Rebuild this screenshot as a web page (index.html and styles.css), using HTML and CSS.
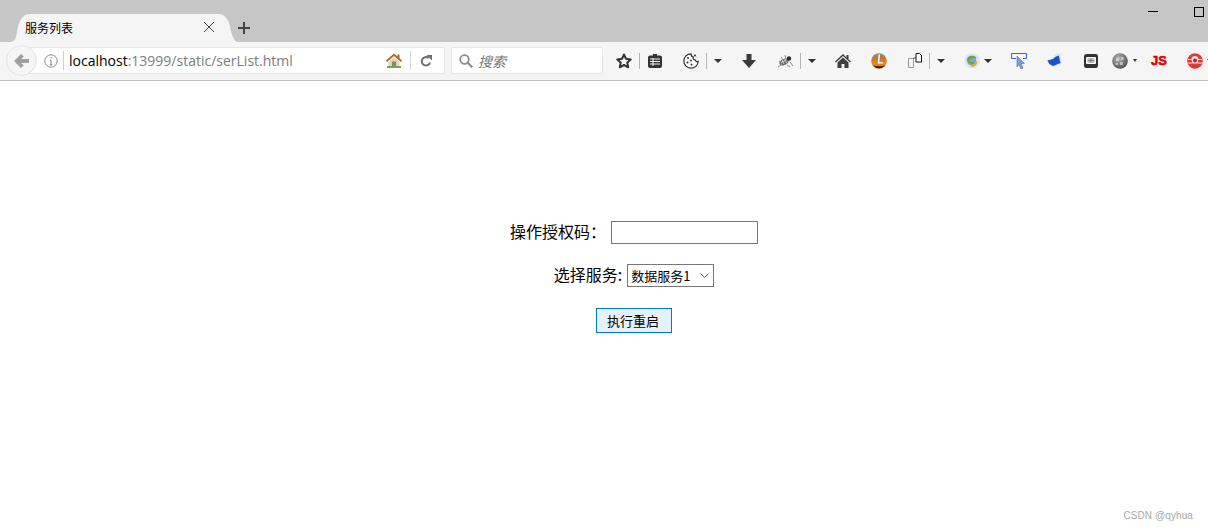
FILE: index.html
```html
<!DOCTYPE html>
<html lang="zh">
<head>
    <meta charset="UTF-8">
    <title>服务列表</title>
    <link rel="stylesheet" href="styles.css">
</head>
<body>
    <!-- 标题栏 -->
    <div class="titlebar">
        <div class="tab">
            <span class="tab-title">服务列表</span>
            <svg class="tab-close" width="12" height="12" viewBox="0 0 12 12"><path d="M1 1l10 10M11 1L1 11" stroke="#444" stroke-width="1" fill="none"/></svg>
        </div>
        <svg class="tab-new" width="12" height="12" viewBox="0 0 12 12"><path d="M6 0v12M0 6h12" stroke="#444" stroke-width="2" fill="none"/></svg>
        <div class="window-controls">
            <span class="win-min"></span>
            <span class="win-max"></span>
        </div>
    </div>

    <!-- 工具栏 -->
    <div class="toolbar">
        <div class="back-btn">
            <svg width="15" height="14" viewBox="0 0 15 14"><path d="M7 0l2.800 2.600L7.200 5H15v4H7.200l2.600 2.400L7 14 0 7z" fill="#a0a0a0"/></svg>
        </div>
        <div class="urlbar">
            <svg class="url-info" width="14" height="14" viewBox="0 0 14 14"><circle cx="7" cy="7" r="6.200" fill="none" stroke="#8a8a8a"/><path d="M7 3v1.600M7 6v5M5.800 6.200H7M5.800 10.800h2.400" stroke="#808080" fill="none"/></svg>
            <span class="url-sep"></span>
            <span class="url-text"><b>localhost</b>:13999/static/serList.html</span>
            <svg class="url-home" width="16" height="15" viewBox="0 0 16 15">
                <path d="M8 4L2.500 9V13.500h11V9z" fill="#e8d4aa"/>
                <path d="M8 .5L0 7.500l1 1.500 7-6 7 6 1-1.500-2.500-2.200V1.500h-2v2z" fill="#a8692c"/>
                <rect x="6" y="8.500" width="4" height="5" fill="#7f858c"/>
                <rect x="1" y="13" width="14" height="2" fill="#6ea84a"/>
            </svg>
            <span class="url-sep-right"></span>
            <svg class="url-reload" width="12" height="12" viewBox="0 0 12 12"><path d="M10 7.500A4.200 4.200 0 1 1 8.600 3" fill="none" stroke="#6e6e6e" stroke-width="2"/><path d="M6.500 0H12v5.500z" fill="#6e6e6e"/></svg>
        </div>
        <div class="searchbar">
            <svg width="14" height="14" viewBox="0 0 14 14"><circle cx="5.500" cy="5.500" r="4.300" fill="none" stroke="#8c8c8c" stroke-width="1.800"/><path d="M8.800 8.800l4.400 4.400" stroke="#8c8c8c" stroke-width="2.200"/></svg>
            <span class="search-text">搜索</span>
        </div>

        <svg class="ic-star" width="16" height="16" viewBox="0 0 16 16"><path d="M8 1.500l2 4.300 4.700.6-3.400 3.200.9 4.700L8 12l-4.200 2.300.9-4.700L1.300 6.400 6 5.800z" fill="none" stroke="#333" stroke-width="2" stroke-linejoin="round"/></svg>
        <span class="sep sep-star"></span>
        <svg class="ic-clip" width="14" height="15" viewBox="0 0 14 15"><path d="M2 2.500h3V1h4v1.500h3a2 2 0 0 1 2 2V13a2 2 0 0 1-2 2H2a2 2 0 0 1-2-2V4.500a2 2 0 0 1 2-2z" fill="#333"/><path d="M2 6h10M2 8.500h10M2 11h10M5 5v8" stroke="#f5f5f5" fill="none"/></svg>
        <svg class="ic-cookie" width="16" height="16" viewBox="0 0 16 16"><path d="M8 .8a7.200 7.200 0 1 0 7.200 7.700c-1.300.6-2.700-.2-2.800-1.500C10.800 7 9.600 5.500 10.300 4 9 3.800 8 2.500 8 .8z" fill="#fff" stroke="#333" stroke-width="1.200"/><circle cx="5" cy="5" r="1" fill="#333"/><circle cx="8" cy="7.500" r="1" fill="#333"/><circle cx="4.500" cy="9.500" r="1" fill="#333"/><circle cx="8.500" cy="11.500" r="1" fill="#333"/><circle cx="12" cy="2.500" r="1" fill="#333"/></svg>
        <span class="sep sep-cookie"></span>
        <span class="caret caret-cookie"></span>
        <svg class="ic-down" width="14" height="14" viewBox="0 0 14 14"><path d="M4.500 0h5v6H14l-7 8-7-8h4.500z" fill="#3a3a3a"/></svg>
        <svg class="ic-bug" width="16" height="14" viewBox="0 0 16 14"><ellipse cx="7" cy="8" rx="4.800" ry="3" transform="rotate(-25 7 8)" fill="#707070"/><path d="M4 9l5-3M5 6l2 4M8 5l1.500 4" stroke="#ddd" stroke-width=".8"/><circle cx="12" cy="4.500" r="2.200" fill="#2c2c2c"/><path d="M1 13l4-3M4 3l2 3M8 1l1 4M13 8l3 4M2 7l3 1M10 11l3 2" stroke="#888" fill="none"/></svg>
        <span class="sep sep-bug"></span>
        <span class="caret caret-bug"></span>
        <svg class="ic-home" width="16" height="14" viewBox="0 0 16 14"><path d="M8 0L0 7.500l1 1L8 2l7 6.500 1-1-2.500-2.300V1h-2v2.400z" fill="#3f3f3f"/><path d="M8 3.400L2.500 8.500V14H6.500V10h3v4h4V8.500z" fill="#3f3f3f"/></svg>
        <svg class="ic-l" width="16" height="16" viewBox="0 0 16 16">
            <defs><linearGradient id="lg" x1="0" y1="0" x2="0" y2="1"><stop offset="0" stop-color="#8f8f8f"/><stop offset=".3" stop-color="#b07a3c"/><stop offset=".65" stop-color="#ef8a0c"/><stop offset="1" stop-color="#d86a00"/></linearGradient></defs>
            <circle cx="8" cy="8" r="7.800" fill="url(#lg)"/>
            <path d="M2 12.500a8 8 0 0 0 12 0c-2 1-10 1-12 0z" fill="#1c1c1c"/>
            <path d="M7.500 1.500L6.800 10.500h5V9.200H8.300l.7-7.700z" fill="#fff"/>
        </svg>
        <svg class="ic-docs" width="14" height="15" viewBox="0 0 14 15"><path d="M.5 5.500h4l1 1v8h-5z" fill="#f5f5f5" stroke="#999"/><path d="M8 .5h3.500l2 2v6.500H8z" fill="#fff" stroke="#111"/><path d="M5 5.500l3-1" stroke="#444"/></svg>
        <span class="sep sep-docs"></span>
        <span class="caret caret-docs"></span>
        <svg class="ic-globe" width="16" height="16" viewBox="0 0 16 16">
            <circle cx="8" cy="8" r="7.800" fill="#d6eaf6"/>
            <circle cx="7.500" cy="7.500" r="4.800" fill="#7fa8c8"/>
            <path d="M3 7c.5-4 6-6 9.500-2.500l-2 1C9 4.500 6 4.500 5 8zM5 8c1.500 1.500 4 .5 6 2l-2.500 1c-1-1-3-.7-4.500-1.300z" fill="#6fa032"/>
            <path d="M6.500 13.500c3.500 1 6.500-1.200 7-4.500l-2-.8c-.3 2-1.800 3.300-4 3.300z" fill="#eda81c"/>
        </svg>
        <span class="caret caret-globe"></span>
        <svg class="ic-cursor" width="16" height="16" viewBox="0 0 16 16"><path d="M5 5.500H.5v-5h15v5H12" fill="none" stroke="#3a66c8"/><path d="M6 3l7.500 7.500H10l2 4.500-2 1-2-4.500-2 2.500z" fill="#7ba0dc" stroke="#4a72b8" stroke-width=".6"/></svg>
        <svg class="ic-blue" width="16" height="15" viewBox="0 0 16 15"><path d="M0 7l5-1 5-5 4-1 1 5 1 6-9 3-4-2z" fill="#dde4f0"/><path d="M1.500 7.500L7 6l3-2.500 3-1 .5 3.500 1 4-7.500 3-3.500-2z" fill="#1a52cc"/></svg>
        <svg class="ic-ae" width="14" height="14" viewBox="0 0 14 14"><rect width="14" height="14" rx="2.500" fill="#333"/><rect x="2" y="3" width="10" height="7" rx="1" fill="#fff"/><path d="M3.500 5h7M3.500 6.500h7M3.500 8h7M7 4.500V8.500" stroke="#555" stroke-width=".7" fill="none"/></svg>
        <svg class="ic-ball" width="16" height="16" viewBox="0 0 16 16">
            <defs><radialGradient id="bg" cx=".4" cy=".35" r=".7"><stop offset="0" stop-color="#b8b8b8"/><stop offset="1" stop-color="#4c4c4c"/></radialGradient></defs>
            <circle cx="8" cy="8" r="7.800" fill="url(#bg)"/>
            <path d="M4 5h3v3H4zM9 4h2.500v3H9zM8 9h3v3H8zM3.500 10H6v2H3.500z" fill="#e4e4e4" opacity=".6"/>
        </svg>
        <span class="caret-small"></span>
        <span class="ic-js">JS</span>
        <svg class="ic-red" width="16" height="16" viewBox="0 0 16 16"><circle cx="8" cy="8" r="7.800" fill="#dc3a3a"/><path d="M1 6.500h14M.5 10h15" stroke="#f8dcdc" stroke-width="1.200"/><path d="M4.500 6.500a3.500 3.500 0 0 1 7 0l-1 3.500h-5z" fill="#f8e4e4"/><circle cx="8" cy="7.500" r="2" fill="#c81e1e"/></svg>
        <span class="caret-small caret-last"></span>
    </div>

    <!-- 页面内容 -->
    <div class="page">
        <form class="restart-form">
            <div class="form-row">
                <label class="label-code" for="authCode">操作授权码：</label>
                <input type="text" id="authCode" class="input-code">
            </div>
            <div class="form-row">
                <label class="label-service" for="service">选择服务:</label>
                <select id="service" class="select-service">
                    <option>数据服务1</option>
                </select>
            </div>
            <div class="form-row">
                <button type="button" class="btn-restart">执行重启</button>
            </div>
        </form>
        <div class="watermark">CSDN @qyhua</div>
    </div>
</body>
</html>
```

FILE: styles.css
```css
* {
    margin: 0;
    padding: 0;
    box-sizing: border-box;
}

html, body {
    width: 1208px;
    height: 529px;
    overflow: hidden;
    background: #fff;
}

body {
    font-family: "Noto Sans CJK SC", "Liberation Sans", sans-serif;
    display: flex;
    flex-direction: column;
}

/* 标题栏 */
.titlebar {
    display: flex;
    height: 42px;
    background: #c6c6c6;
    flex-shrink: 0;
}

/* 标签页 - 底部两侧外扩的曲线 */
.tab {
    display: flex;
    align-items: center;
    width: 228px;
    height: 28px;
    margin-top: 14px;
    margin-left: 10px;
    padding: 0 23px 2px 15px;
    background: #f5f5f5;
    clip-path: path("M0 28 C5 28 6 24 7 18 C8 11 11 0 20 0 H208 C215 0 218 5 220 12 C221 20 224 28 228 28 Z");
}

.tab-title {
    font-size: 12px;
    color: #000;
}

.tab-close {
    margin-left: auto;
}

.tab-new {
    margin-top: 22px;
}

.window-controls {
    margin-left: auto;
    display: flex;
    align-items: flex-start;
}

.win-min {
    width: 10px;
    height: 1px;
    margin-top: 11px;
    background: #000;
}

.win-max {
    width: 10px;
    height: 10px;
    margin: 7px 4px 0 36px;
    border: 1px solid #000;
}

/* 工具栏 */
.toolbar {
    display: flex;
    align-items: center;
    height: 39px;
    padding-left: 6px;
    padding-bottom: 1px;
    background: #f5f5f5;
    border-bottom: 1px solid #c2c2c2;
    flex-shrink: 0;
    overflow: hidden;
}

.toolbar > * {
    flex-shrink: 0;
}

.back-btn {
    display: flex;
    align-items: center;
    justify-content: center;
    width: 31px;
    height: 31px;
    margin-right: -15px;
    background: #f5f5f5;
    border: 1px solid #e2e2e2;
    border-radius: 50%;
    position: relative;
    z-index: 1;
}

.urlbar {
    display: flex;
    align-items: center;
    width: 423px;
    height: 27px;
    padding-left: 21px;
    background: #fff;
    border: 1px solid #e6e6e6;
    border-radius: 0 2px 2px 0;
}

.url-info {
    flex-shrink: 0;
}

.url-sep {
    width: 1px;
    height: 19px;
    margin: 0 5px 0 5px;
    background: #d0d0d0;
}

.url-text {
    font-family: "Open Sans", "Liberation Sans", sans-serif;
    font-size: 14px;
    color: #7c7c7c;
    white-space: nowrap;
}

.url-text b {
    font-weight: 400;
    color: #000;
}

.url-home {
    margin-left: auto;
}

.url-sep-right {
    width: 1px;
    height: 19px;
    margin: 0 9px 0 8px;
    background: #d8d8d8;
}

.url-reload {
    margin-right: 12px;
}

.searchbar {
    display: flex;
    align-items: center;
    width: 152px;
    height: 27px;
    margin-left: 6px;
    padding-left: 7px;
    background: #fff;
    border: 1px solid #e6e6e6;
    border-radius: 2px;
}

.search-text {
    margin-left: 5px;
    font-size: 14px;
    font-style: italic;
    color: #777;
}

.sep {
    width: 1px;
    height: 16px;
    background: #b4b4b4;
    margin-left: 7px;
}

.caret {
    width: 0;
    height: 0;
    margin-left: 7px;
    border-left: 4px solid transparent;
    border-right: 4px solid transparent;
    border-top: 4px solid #333;
}

.caret-small {
    width: 0;
    height: 0;
    margin-left: 5px;
    border-left: 2.5px solid transparent;
    border-right: 2.5px solid transparent;
    border-top: 3px solid #333;
}

.ic-star { margin-left: 13px; }
.ic-clip { margin-left: 8px; }
.ic-cookie { margin-left: 21px; }
.ic-down { margin-left: 20px; }
.ic-bug { margin-left: 21px; }
.ic-home { margin-left: 19px; }
.ic-l { margin-left: 20px; }
.ic-docs { margin-left: 21px; }
.ic-globe { margin-left: 19px; }
.caret-globe { margin-left: 4px; }
.ic-cursor { margin-left: 19px; }
.ic-blue { margin-left: 19px; }
.ic-ae { margin-left: 22px; }
.ic-ball { margin-left: 14px; }

.ic-js {
    width: 16px;
    margin-left: 14px;
    font-family: "Liberation Sans", sans-serif;
    font-size: 13px;
    font-weight: 700;
    line-height: 14px;
    color: #e80000;
    -webkit-text-stroke: .6px #e80000;
}

.ic-red { margin-left: 20px; }
.caret-last { margin-left: 4px; }

/* 表单 */
.page {
    flex: 1;
    display: flex;
    flex-direction: column;
    background: #fff;
}

.restart-form {
    display: flex;
    flex-direction: column;
    align-items: center;
    padding-top: 140px;
    padding-left: 60px;
}

.form-row {
    display: flex;
    align-items: center;
    margin-bottom: 20px;
}

.form-row label {
    font-size: 16px;
    line-height: 21px;
    padding-bottom: 2px;
    color: #000;
}

.input-code {
    width: 147px;
    height: 23px;
    margin-left: 5px;
    border: 1px solid #767676;
    background: #fff;
}

.select-service {
    width: 87px;
    height: 23px;
    margin-left: 5px;
    padding-left: 3px;
    font-family: inherit;
    font-size: 13px;
    color: #000;
    -webkit-appearance: none;
    appearance: none;
    background: #fff url("data:image/svg+xml;charset=UTF-8,%3csvg xmlns='http://www.w3.org/2000/svg' viewBox='0 0 9 5'%3e%3cpath d='M.5.5l4 4 4-4' fill='none' stroke='%23555'/%3e%3c/svg%3e") no-repeat right 4px center;
    background-size: 9px 5px;
    border: 1px solid #767676;
    border-radius: 0;
}

.btn-restart {
    width: 76px;
    height: 25px;
    margin-top: 1px;
    padding-right: 2px;
    font-family: inherit;
    font-size: 13px;
    color: #000;
    background: #e5f1fb;
    border: 1px solid #0078d7;
}

.watermark {
    margin-top: auto;
    padding: 0 15px 8px 0;
    text-align: right;
    font-family: "Liberation Sans", sans-serif;
    font-size: 10px;
    letter-spacing: .1px;
    color: #a8a8a8;
}
```
